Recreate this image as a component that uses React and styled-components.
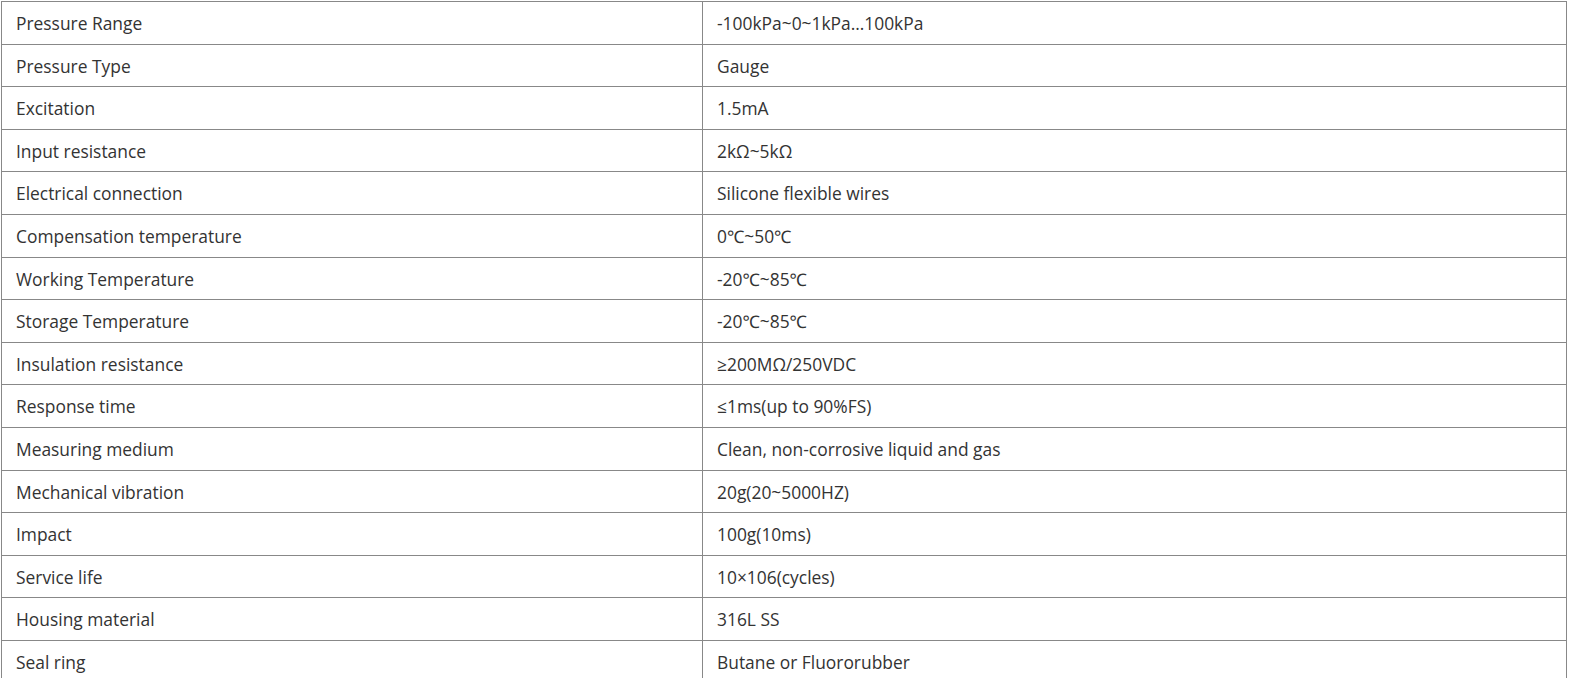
import React from "react";
import styled, { createGlobalStyle } from "styled-components";

const GlobalStyle = createGlobalStyle`
  html, body {
    margin: 0;
    padding: 0;
    background: #fff;
  }
  body {
    font-family: "Open Sans", "Noto Sans", "Liberation Sans", sans-serif;
  }
`;

const Page = styled.div`
  padding: 1px 0 0 1px;
`;

const SpecTable = styled.table`
  width: 1566px;
  border-collapse: collapse;
  table-layout: fixed;
`;

const LabelCol = styled.col`
  width: 701px;
`;

const Row = styled.tr``;

const Cell = styled.td`
  border: 1px solid #888;
  padding: 11px 14px 9px;
  font-size: 17.4px;
  line-height: 21.6px;
  color: #333;
  text-align: left;
  vertical-align: middle;
  white-space: nowrap;
`;

const specs = [
  ["Pressure Range", "-100kPa~0~1kPa…100kPa"],
  ["Pressure Type", "Gauge"],
  ["Excitation", "1.5mA"],
  ["Input resistance", "2kΩ~5kΩ"],
  ["Electrical connection", "Silicone flexible wires"],
  ["Compensation temperature", "0℃~50℃"],
  ["Working Temperature", "-20℃~85℃"],
  ["Storage Temperature", "-20℃~85℃"],
  ["Insulation resistance", "≥200MΩ/250VDC"],
  ["Response time", "≤1ms(up to 90%FS)"],
  ["Measuring medium", "Clean, non-corrosive liquid and gas"],
  ["Mechanical vibration", "20g(20~5000HZ)"],
  ["Impact", "100g(10ms)"],
  ["Service life", "10×106(cycles)"],
  ["Housing material", "316L SS"],
  ["Seal ring", "Butane or Fluororubber"],
];

const App = () => {
  return (
    <Page>
      <GlobalStyle />
      <SpecTable>
        <colgroup>
          <LabelCol />
          <col />
        </colgroup>
        <tbody>
          {specs.map(([label, value]) => (
            <Row key={label}>
              <Cell>{label}</Cell>
              <Cell>{value}</Cell>
            </Row>
          ))}
        </tbody>
      </SpecTable>
    </Page>
  );
};

export default App;
